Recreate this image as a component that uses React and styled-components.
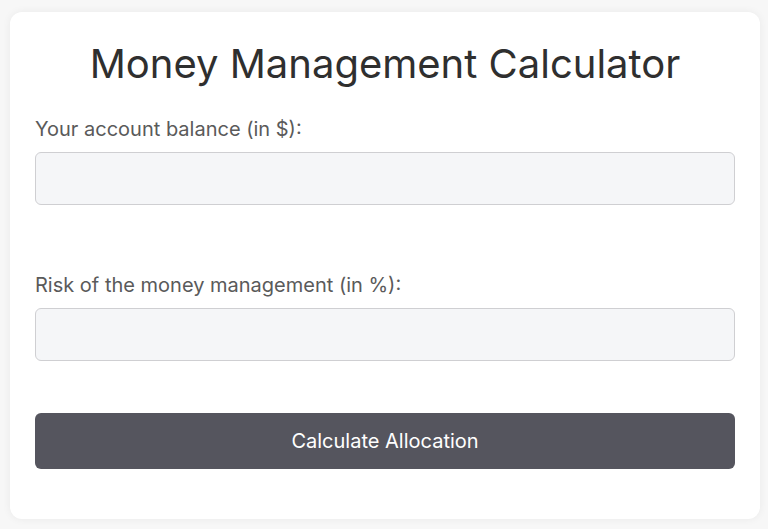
import React, { useState } from "react";
import styled, { createGlobalStyle } from "styled-components";

const GlobalStyle = createGlobalStyle`
  html, body {
    margin: 0;
    padding: 0;
    background: #f7f7f7;
    font-family: Inter, "Noto Sans", sans-serif;
  }
`;

const Page = styled.div`
  padding: 12px 8px 10px 10px;
`;

const Card = styled.div`
  background: #ffffff;
  border-radius: 12px;
  box-shadow: 0 0 8px rgba(0, 0, 0, 0.06);
  padding: 28px 25px 50px 25px;
`;

const Title = styled.h1`
  margin: 0 0 29px 0;
  text-align: center;
  font-size: 40px;
  font-weight: 400;
  color: #2f2f2f;
  line-height: 48px;
`;

const Field = styled.div`
  display: flex;
  flex-direction: column;
  margin-bottom: ${(p) => p.$gap}px;
`;

const Label = styled.label`
  font-size: 20px;
  line-height: 24px;
  color: #5a5a5a;
  margin-bottom: 11px;
`;

const Input = styled.input`
  height: 53px;
  box-sizing: border-box;
  border: 1px solid #cfcfd2;
  border-radius: 6px;
  background: #f5f6f8;
  padding: 0 12px;
  font-size: 18px;
  font-family: inherit;
  outline: none;
`;

const Button = styled.button`
  width: 100%;
  height: 56px;
  border: none;
  border-radius: 6px;
  background: #55555e;
  color: #ffffff;
  font-family: inherit;
  font-size: 20px;
  cursor: pointer;
`;

const App = () => {
  const [balance, setBalance] = useState("");
  const [risk, setRisk] = useState("");

  return (
    <>
      <GlobalStyle />
      <Page>
        <Card>
          <Title>Money Management Calculator</Title>
          <Field $gap={68}>
            <Label>Your account balance (in $):</Label>
            <Input value={balance} onChange={(e) => setBalance(e.target.value)} />
          </Field>
          <Field $gap={52}>
            <Label>Risk of the money management (in %):</Label>
            <Input value={risk} onChange={(e) => setRisk(e.target.value)} />
          </Field>
          <Button>Calculate Allocation</Button>
        </Card>
      </Page>
    </>
  );
};

export default App;
